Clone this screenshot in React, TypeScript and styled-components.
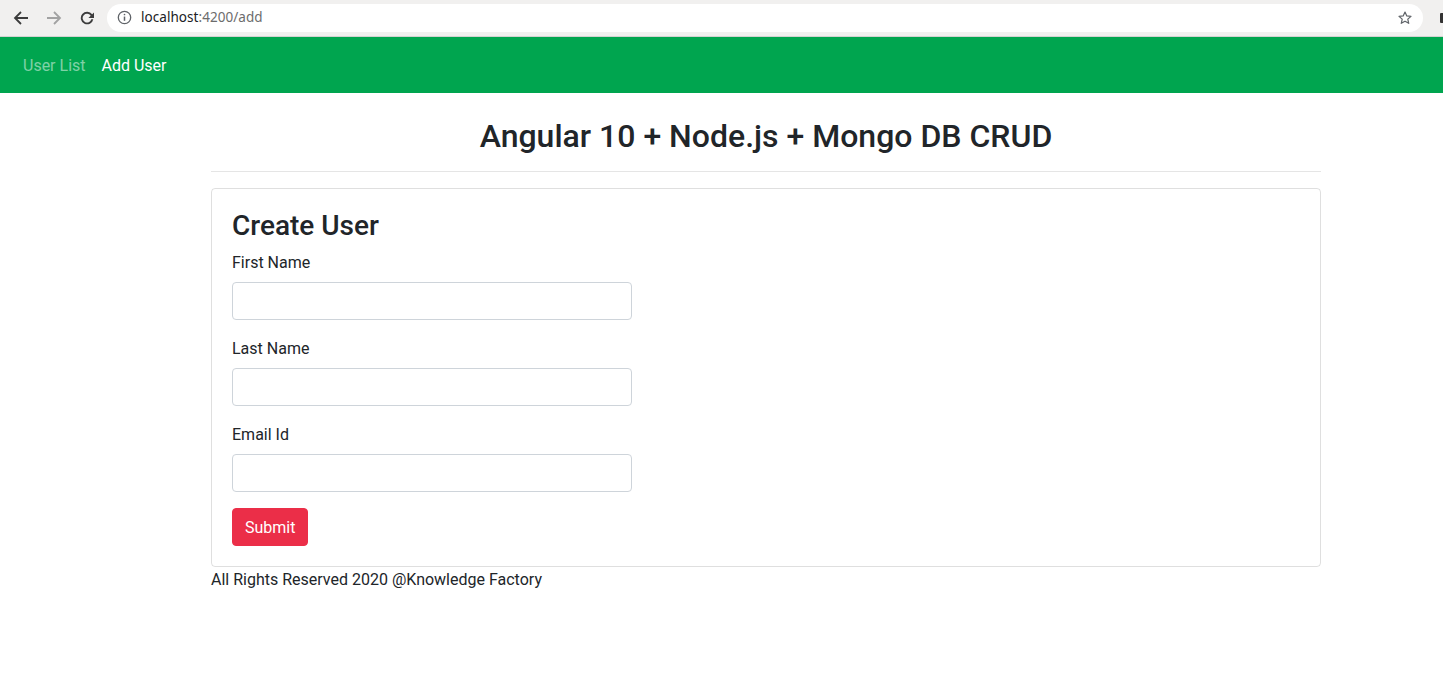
import React from "react";
import styled, { createGlobalStyle } from "styled-components";

const GlobalStyle = createGlobalStyle`
  html, body { margin: 0; padding: 0; background: #fff; }
  body {
    font-family: Roboto, "Liberation Sans", Arial, sans-serif;
    font-size: 16px;
    line-height: 1.5;
    color: #212529;
  }
  * { box-sizing: border-box; }
`;

const Chrome = styled.div`
  height: 37px;
  background: #f1f0ef;
  border-bottom: 1px solid #d4d3d1;
  display: flex;
  align-items: center;
  padding: 0 0 1px 0;
  overflow: hidden;
`;

const NavButton = styled.div<{ $dim?: boolean }>`
  width: 32px;
  height: 28px;
  display: flex;
  align-items: center;
  justify-content: center;
  color: ${(p) => (p.$dim ? "#a2a2a2" : "#3c3c3c")};
`;

const NavButtons = styled.div`
  display: flex;
  align-items: center;
  gap: 1px;
  padding-left: 5px;
  width: 107px;
`;

const Omnibox = styled.div`
  flex: 1;
  height: 28px;
  background: #fff;
  border-radius: 14px;
  display: flex;
  align-items: center;
  padding: 0 10px 0 10px;
  margin-right: 17px;
`;

const UrlText = styled.span`
  font-family: "Noto Sans", "DejaVu Sans", sans-serif;
  font-size: 13.5px;
  color: #202124;
  margin-left: 9px;
  flex: 1;
  letter-spacing: 0.05px;
`;

const UrlRest = styled.span`
  color: #6c6c6c;
`;

const ExtIcon = styled.div`
  width: 6px;
  height: 10px;
  background: #333;
  border-radius: 1px;
  margin-right: -3px;
`;

const Navbar = styled.nav`
  height: 56px;
  background: #00a54f;
  display: flex;
  align-items: center;
  padding: 8px 15px;
`;

const NavLink = styled.a<{ $active?: boolean }>`
  padding: 9px 8px 7px;
  color: ${(p) => (p.$active ? "#fff" : "rgba(255,255,255,0.5)")};
  text-decoration: none;
  font-size: 16px;
  line-height: 24px;
`;

const Container = styled.div`
  width: 1140px;
  margin-left: 196px;
  padding: 24px 15px 0;
`;

const Title = styled.h2`
  margin: 0;
  font-size: 32px;
  font-weight: 500;
  line-height: 1.2;
  text-align: center;
`;

const Rule = styled.hr`
  margin: 16px 0;
  border: 0;
  border-top: 1px solid rgba(0, 0, 0, 0.1);
`;

const Card = styled.div`
  border: 1px solid rgba(0, 0, 0, 0.125);
  border-radius: 4px;
  padding: 20px;
`;

const CardTitle = styled.h3`
  margin: 0 0 8px;
  font-size: 28px;
  font-weight: 500;
  line-height: 33px;
`;

const FormGroup = styled.div`
  margin-bottom: 16px;
`;

const Label = styled.label`
  display: block;
  margin-bottom: 8px;
  padding-top: 1px;
  line-height: 23px;
`;

const Input = styled.input`
  display: block;
  width: 400px;
  height: 38px;
  padding: 6px 12px;
  font-size: 16px;
  border: 1px solid #ced4da;
  border-radius: 4px;
  background: #fff;
  font-family: inherit;
`;

const SubmitButton = styled.button`
  display: block;
  height: 38px;
  padding: 7px 12px 5px;
  font-family: inherit;
  font-size: 16px;
  line-height: 24px;
  color: #fff;
  background: #eb2e48;
  border: 1px solid #eb2e48;
  border-radius: 4px;
`;

const Footer = styled.div`
  line-height: 24px;
  padding-top: 1px;
`;

const Back = () => (
  <svg width="16" height="16" viewBox="0 0 16 16" fill="none" stroke="currentColor" strokeWidth="1.8">
    <path d="M15 8H2.5M8 2L2 8l6 6" />
  </svg>
);
const Fwd = () => (
  <svg width="16" height="16" viewBox="0 0 16 16" fill="none" stroke="currentColor" strokeWidth="1.8">
    <path d="M1 8h12.5M8 2l6 6-6 6" />
  </svg>
);
const Reload = () => (
  <svg width="16" height="16" viewBox="0 0 16 16">
    <path d="M13.2 4.3A6.3 6.3 0 1 0 14.3 9.2h-2A4.4 4.4 0 1 1 11.7 5.7L9.4 8h5.6V2.4z" fill="currentColor" />
  </svg>
);
const Info = () => (
  <svg width="15" height="15" viewBox="0 0 16 16" fill="none" stroke="#5f6368">
    <circle cx="8" cy="8" r="6.6" strokeWidth="1.4" />
    <path d="M8 7v4.5" strokeWidth="1.6" />
    <circle cx="8" cy="4.8" r="0.9" fill="#5f6368" stroke="none" />
  </svg>
);
const Star = () => (
  <svg width="16" height="16" viewBox="0 0 24 24" fill="none" stroke="#5f6368" strokeWidth="1.8" strokeLinejoin="round">
    <path d="M12 3l2.7 5.9 6.3.6-4.8 4.2 1.4 6.3L12 16.8 6.4 20l1.4-6.3L3 9.5l6.3-.6z" />
  </svg>
);

export default function App() {
  return (
    <>
      <GlobalStyle />
      <Chrome>
        <NavButtons>
          <NavButton><Back /></NavButton>
          <NavButton $dim><Fwd /></NavButton>
          <NavButton><Reload /></NavButton>
        </NavButtons>
        <Omnibox>
          <Info />
          <UrlText>
            localhost<UrlRest>:4200/add</UrlRest>
          </UrlText>
          <Star />
        </Omnibox>
        <ExtIcon />
      </Chrome>
      <Navbar>
        <NavLink href="#">User List</NavLink>
        <NavLink href="#" $active>Add User</NavLink>
      </Navbar>
      <Container>
        <Title>Angular 10 + Node.js + Mongo DB CRUD</Title>
        <Rule />
        <Card>
          <CardTitle>Create User</CardTitle>
          <FormGroup>
            <Label>First Name</Label>
            <Input type="text" />
          </FormGroup>
          <FormGroup>
            <Label>Last Name</Label>
            <Input type="text" />
          </FormGroup>
          <FormGroup>
            <Label>Email Id</Label>
            <Input type="text" />
          </FormGroup>
          <SubmitButton type="button">Submit</SubmitButton>
        </Card>
        <Footer>All Rights Reserved 2020 @Knowledge Factory</Footer>
      </Container>
    </>
  );
}
